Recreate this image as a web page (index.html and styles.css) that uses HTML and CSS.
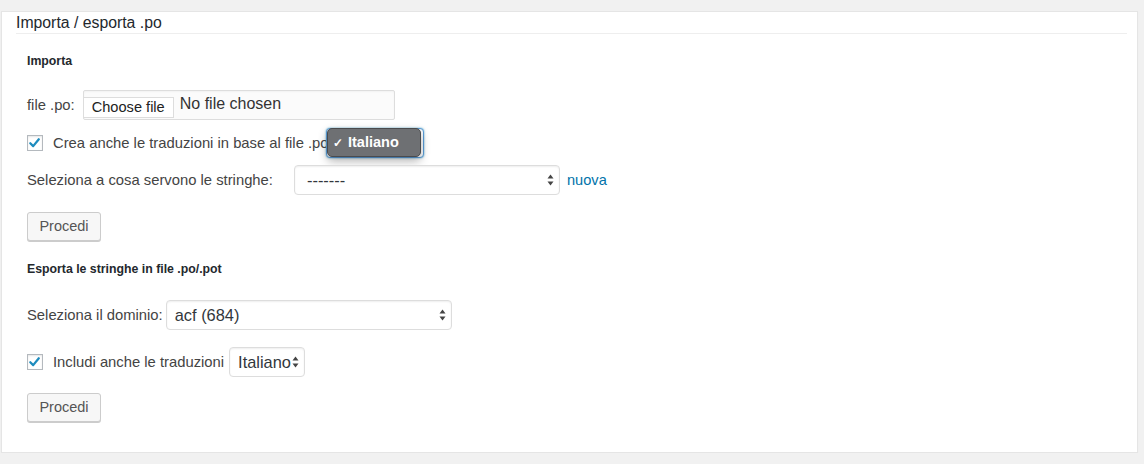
FILE: index.html
```html
<!DOCTYPE html>
<html lang="it">
<head>
<meta charset="utf-8">
<title>Importa / esporta .po</title>
<link rel="stylesheet" href="styles.css">
</head>
<body>
<div class="panel">
  <h3 class="panel-title">Importa / esporta .po</h3>
  <div class="inside">
    <h4 class="section-h first">Importa</h4>

    <div class="row row-file">
      <span class="lbl">file .po:</span>
      <div class="file-input">
        <span class="file-btn">Choose file</span>
        <span class="file-name">No file chosen</span>
      </div>
    </div>

    <div class="row row-check1">
      <span class="checkbox"><svg viewBox="0 0 16 16" width="16" height="16"><path d="M3.5 8.2 L6.6 11.3 L12.6 4" fill="none" stroke="#1e8cbe" stroke-width="2.4" stroke-linecap="round" stroke-linejoin="round"/></svg></span>
      <span class="lbl">Crea anche le traduzioni in base al file .po</span>
      <div class="select select-focus sel-lang1"></div>
      <div class="popup"><span class="tick">✓</span>Italiano</div>
    </div>

    <div class="row row-sel">
      <span class="lbl lbl-wide">Seleziona a cosa servono le stringhe:</span>
      <div class="select sel-use">
        <span class="sel-text">-------</span>
        <svg class="arrows" viewBox="0 0 7 12" width="7" height="12"><path d="M3.5 0.5 L6.5 4.5 L0.5 4.5 Z M3.5 11.5 L6.5 7.5 L0.5 7.5 Z" fill="#444"/></svg>
      </div>
      <a class="link" href="#">nuova</a>
    </div>

    <div class="row row-btn1">
      <span class="button">Procedi</span>
    </div>

    <h4 class="section-h second">Esporta le stringhe in file .po/.pot</h4>

    <div class="row row-dom">
      <span class="lbl">Seleziona il dominio:</span>
      <div class="select sel-dom">
        <span class="sel-text">acf (684)</span>
        <svg class="arrows" viewBox="0 0 7 12" width="7" height="12"><path d="M3.5 0.5 L6.5 4.5 L0.5 4.5 Z M3.5 11.5 L6.5 7.5 L0.5 7.5 Z" fill="#444"/></svg>
      </div>
    </div>

    <div class="row row-check2">
      <span class="checkbox"><svg viewBox="0 0 16 16" width="16" height="16"><path d="M3.5 8.2 L6.6 11.3 L12.6 4" fill="none" stroke="#1e8cbe" stroke-width="2.4" stroke-linecap="round" stroke-linejoin="round"/></svg></span>
      <span class="lbl">Includi anche le traduzioni</span>
      <div class="select sel-lang2">
        <span class="sel-text">Italiano</span>
        <svg class="arrows" viewBox="0 0 7 12" width="7" height="12"><path d="M3.5 0.5 L6.5 4.5 L0.5 4.5 Z M3.5 11.5 L6.5 7.5 L0.5 7.5 Z" fill="#444"/></svg>
      </div>
    </div>

    <div class="row row-btn2">
      <span class="button">Procedi</span>
    </div>
  </div>
</div>
</body>
</html>
```
FILE: styles.css
```css
html, body {
  margin: 0;
  padding: 0;
  background: #f1f1f1;
  font-family: "Liberation Sans", Arial, sans-serif;
  color: #444;
  font-size: 14.8px;
}

.panel {
  box-sizing: border-box;
  margin: 11px 0 0 1px;
  width: 1137px;
  height: 442px;
  background: #fff;
  border: 1px solid #e5e5e5;
  box-shadow: 0 1px 1px rgba(0,0,0,.04);
  padding: 0 10px 0 14px;
}

.panel-title {
  margin: 0;
  padding: 0;
  font-size: 15.8px;
  font-weight: normal;
  line-height: 21px;
  color: #23282d;
  border-bottom: 1px solid #eee;
}

.inside {
  padding: 0 11px;
}

.section-h {
  margin: 0;
  font-size: 12.3px;
  line-height: 16px;
  font-weight: bold;
  color: #23282d;
}
.section-h.first { margin-top: 19px; }
.section-h.second { margin-top: 20px; }

.row {
  display: flex;
  align-items: center;
  position: relative;
}

.lbl {
  font-size: 14.8px;
  line-height: 18px;
  color: #444;
  white-space: nowrap;
}

.row-file { margin-top: 21px; height: 30px; }
.row-file .lbl { margin-right: 8px; }

.file-input {
  box-sizing: border-box;
  width: 312px;
  height: 30px;
  border: 1px solid #ddd;
  border-radius: 2px;
  background: #fbfbfb;
  box-shadow: inset 0 1px 2px rgba(0,0,0,.04);
  position: relative;
  display: flex;
  align-items: flex-start;
}
.file-btn {
  box-sizing: border-box;
  margin-top: 6px;
  height: 21px;
  padding: 0 8px;
  background: #fff;
  border: 1px solid #ddd;
  border-left: none;
  font-size: 14.6px;
  line-height: 19px;
  color: #222;
}
.file-name {
  margin-left: 6px;
  margin-top: 4px;
  font-size: 16px;
  line-height: 18px;
  color: #333;
}

.checkbox {
  box-sizing: border-box;
  width: 16px;
  height: 16px;
  border: 1px solid #b4b9be;
  background: #fff;
  box-shadow: inset 0 1px 2px rgba(0,0,0,.1);
  margin-right: 10px;
  display: inline-flex;
  flex: none;
}
.checkbox svg { margin: -1px 0 0 -1px; }

.row-check1 { margin-top: 8px; height: 30px; }

.select {
  box-sizing: border-box;
  height: 30px;
  border: 1px solid #ddd;
  border-radius: 4px;
  background: #fff;
  box-shadow: inset 0 1px 2px rgba(0,0,0,.07);
  display: flex;
  align-items: center;
  position: relative;
  flex: none;
}
.sel-text {
  font-size: 16.4px;
  color: #32373c;
  white-space: nowrap;
}
.arrows {
  position: absolute;
  right: 5px;
  top: 8px;
}

.sel-lang1 {
  margin-left: -3px;
  width: 98px;
  height: 30px;
  border-color: #5b9dd9;
  box-shadow: 0 0 2px rgba(30,140,190,.8);
}
.popup {
  position: absolute;
  left: 300px;
  top: 0;
  box-sizing: border-box;
  width: 94px;
  height: 29px;
  background: #6e7073;
  border: 1px solid #4a4b4d;
  border-radius: 5px;
  box-shadow: 0 4px 10px rgba(0,0,0,.3);
  color: #fff;
  font-weight: bold;
  font-size: 14.5px;
  line-height: 26px;
  padding-left: 5px;
}
.popup .tick { font-weight: bold; margin-right: 5px; font-size: 12px; }

.row-sel { margin-top: 7px; height: 30px; }
.lbl-wide { width: 267px; }
.sel-use { width: 266px; padding-left: 12px; }
.link {
  margin-left: 7px;
  color: #0073aa;
  text-decoration: none;
  font-size: 14.6px;
}

.button {
  box-sizing: border-box;
  display: inline-block;
  height: 29px;
  width: 74px;
  text-align: center;
  line-height: 27px;
  font-size: 14.5px;
  color: #555;
  background: #f7f7f7;
  border: 1px solid #ccc;
  border-radius: 3px;
  box-shadow: 0 1px 0 #ccc;
}
.row-btn1 { margin-top: 17px; }

.row-dom { margin-top: 23px; height: 30px; }
.row-dom .lbl { margin-right: 3px; }
.sel-dom { width: 286px; padding-left: 8px; }

.row-check2 { margin-top: 17px; height: 30px; }
.row-check2 .lbl { margin-right: 5px; }
.sel-lang2 { width: 76px; padding-left: 8px; }

.row-btn2 { margin-top: 16px; }
```
